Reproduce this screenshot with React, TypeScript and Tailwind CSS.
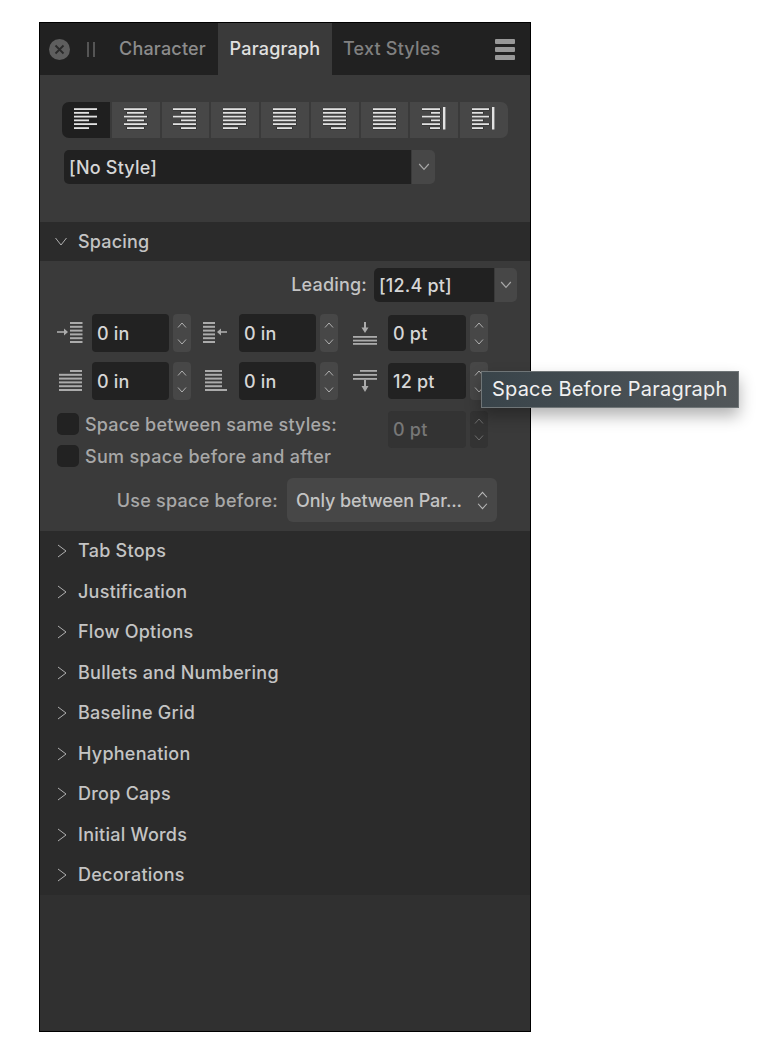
import React from "react";

const FONT = "font-['Inter','Liberation_Sans',sans-serif]";

type Line = [number, number, number];

function Lines({ lines, w = 24, h = 24, extra }: { lines: Line[]; w?: number; h?: number; extra?: React.ReactNode }) {
  return (
    <svg width={w} height={h} viewBox={`0 0 ${w} ${h}`} className="block shrink-0">
      {lines.map(([a, b, y], i) => (
        <g key={i}>
          <rect x={a - 0.5} y={y - 0.2} width={b - a + 1} height={2.6} fill="#262626" />
          <rect x={a} y={y + 0.2} width={b - a} height={1.8} fill="#e2e2e2" />
        </g>
      ))}
      {extra}
    </svg>
  );
}

const ys = [1, 4.75, 8.5, 12.25, 16, 20];
const mk = (spans: [number, number][]): Line[] => spans.map(([a, b], i) => [a, b, ys[i]]);
const Bar = (x: number) => <rect x={x} y={0} width={2.4} height={22.5} fill="#e2e2e2" />;

const alignIcons: React.ReactNode[] = [
  <Lines lines={mk([[0, 23], [0, 15], [0, 23], [0, 15], [0, 23], [0, 15]])} />,
  <Lines lines={mk([[0, 23], [3, 20], [0, 23], [3, 20], [0, 23], [3, 20]])} />,
  <Lines lines={mk([[0, 23], [8, 23], [0, 23], [8, 23], [0, 23], [8, 23]])} />,
  <Lines lines={mk([[0, 23], [0, 23], [0, 23], [0, 23], [0, 23], [0, 15]])} />,
  <Lines lines={mk([[0, 23], [0, 23], [0, 23], [0, 23], [0, 23], [4, 19]])} />,
  <Lines lines={mk([[0, 23], [0, 23], [0, 23], [0, 23], [0, 23], [8, 23]])} />,
  <Lines lines={mk([[0, 23], [0, 23], [0, 23], [0, 23], [0, 23], [0, 23]])} />,
  <Lines lines={mk([[0, 18], [9, 18], [0, 18], [9, 18], [0, 18], [8, 18]])} extra={Bar(21)} />,
  <Lines lines={mk([[0, 17], [0, 11], [0, 17], [0, 11], [0, 17], [0, 11]])} extra={Bar(20)} />,
];

function Chevron({ dir, size = 10, color = "#a8a8a8" }: { dir: "up" | "down"; size?: number; color?: string }) {
  const d = dir === "up" ? "M1 7.5 L5 3 L9 7.5" : "M1 2.5 L5 7 L9 2.5";
  return (
    <svg width={size} height={size} viewBox="0 0 10 10" className="block shrink-0">
      <path d={d} fill="none" stroke={color} strokeWidth={1} />
    </svg>
  );
}

function Spinner({ dim, className = "h-[38px]" }: { dim?: boolean; className?: string }) {
  const c = dim ? "#6e6e6e" : "#b0b0b0";
  return (
    <div className={`w-[18px] rounded-[4px] flex flex-col items-center justify-center gap-[7px] shrink-0 ${className} ${dim ? "bg-[#333333]" : "bg-[#474747]"}`}>
      <Chevron dir="up" size={10} color={c} />
      <Chevron dir="down" size={10} color={c} />
    </div>
  );
}

const G = "#ababab";
function Bars({ lines, w = 26, h = 24, extra }: { lines: Line[]; w?: number; h?: number; extra?: React.ReactNode }) {
  return (
    <svg width={w} height={h} viewBox={`0 0 ${w} ${h}`} className="block shrink-0">
      {lines.map(([a, b, y], i) => (
        <rect key={i} x={a} y={y} width={b - a} height={2} fill={G} />
      ))}
      {extra}
    </svg>
  );
}

const six = [1, 4.8, 8.6, 12.4, 16.2, 20];
const ArrowR = (x1: number, x2: number, y: number) => (
  <g>
    <rect x={x1} y={y - 0.8} width={x2 - x1 - 3} height={1.6} fill={G} />
    <path d={`M${x2 - 4} ${y - 3.5} L${x2} ${y} L${x2 - 4} ${y + 3.5} Z`} fill={G} />
  </g>
);
const ArrowL = (x1: number, x2: number, y: number) => (
  <g>
    <rect x={x1 + 3} y={y - 0.8} width={x2 - x1 - 3} height={1.6} fill={G} />
    <path d={`M${x1 + 4} ${y - 3.5} L${x1} ${y} L${x1 + 4} ${y + 3.5} Z`} fill={G} />
  </g>
);

const IconIndentLeft = <Bars lines={six.map((y) => [13, 25.5, y] as Line)} extra={ArrowR(0, 11, 11)} />;
const IconIndentRight = <Bars lines={six.map((y) => [0, 12, y] as Line)} extra={ArrowL(14, 24, 11)} />;
const IconFirstLine = <Bars lines={six.map((y, i) => [i === 0 ? 13 : 2, 25, y] as Line)} />;
const IconLastLine = <Bars lines={six.map((y, i) => [2, i === 5 ? 24 : 19, y] as Line)} />;
const IconAfter = (
  <svg width={24} height={24} viewBox="0 0 24 24" className="block shrink-0">
    <rect x={11} y={1} width={2} height={6} fill={G} />
    <path d="M8.5 6.5 L15.5 6.5 L12 12 Z" fill={G} />
    <rect x={0} y={15} width={24} height={1.8} fill={G} />
    <rect x={0} y={18.7} width={24} height={1.8} fill={G} />
    <rect x={0} y={22} width={24} height={1.8} fill={G} />
  </svg>
);
const IconBefore = (
  <svg width={24} height={24} viewBox="0 0 24 24" className="block shrink-0">
    <rect x={7} y={1} width={17} height={1.8} fill={G} />
    <rect x={0} y={5} width={24} height={1.8} fill={G} />
    <rect x={0} y={9} width={24} height={1.8} fill={G} />
    <rect x={11} y={11} width={2} height={7} fill={G} />
    <path d="M8.5 17 L15.5 17 L12 23 Z" fill={G} />
  </svg>
);

function Field({ value, dim, wide, className = "h-[38px]" }: { value: string; dim?: boolean; wide?: boolean; className?: string }) {
  return (
    <div className={`rounded-[4px] flex items-center pl-[5px] pt-[1px] shrink-0 ${wide ? "w-[78px]" : "w-[77px]"} ${className} ${dim ? "bg-[#333333] text-[#777777]" : "bg-[#222222] text-[#d6d6d6]"}`}>
      {value}
    </div>
  );
}

function Section({ label }: { label: string }) {
  return (
    <div className="h-[40.5px] flex items-center pl-[17px]">
      <svg width="10" height="14" viewBox="0 0 10 14" className="block shrink-0">
        <path d="M1 1 L9 7 L1 13" fill="none" stroke="#b0b0b0" strokeWidth="1" />
      </svg>
      <span className="ml-[11px] text-[#c4c4c4] tracking-[0.25px]">{label}</span>
    </div>
  );
}

const sections = ["Tab Stops", "Justification", "Flow Options", "Bullets and Numbering", "Baseline Grid", "Hyphenation", "Drop Caps", "Initial Words", "Decorations"];

export default function App() {
  return (
    <div className={`${FONT} w-[772px] h-[1064px] bg-white pt-[22px] pl-[39px] text-[18px] leading-[24px] font-medium tracking-[0.2px]`}>
      <div className="relative w-[492px] h-[1010px] border border-black bg-[#303030] flex flex-col">
        {/* Tabs */}
        <div className="h-[52px] bg-[#212121] flex shrink-0">
          <div className="w-[178px] flex items-center pl-[9px] relative">
            <div className="w-[21px] h-[21px] rounded-full bg-[#5e5e5e] flex items-center justify-center">
              <svg width="11" height="11" viewBox="0 0 11 11">
                <path d="M1.5 1.5 L9.5 9.5 M9.5 1.5 L1.5 9.5" stroke="#2a2a2a" strokeWidth="1.8" />
              </svg>
            </div>
            <div className="ml-[17px] w-[8px] h-[15px] border-x-2 border-[#555555]" />
            <span className="ml-[24px] text-[#8c8c8c]">Character</span>
          </div>
          <div className="w-[114px] bg-[#3a3a3a] flex items-center justify-center text-[#e0e0e0]">Paragraph</div>
          <div className="flex-1 flex items-center pl-[11px] text-[#808080]">
            Text Styles
            <div className="ml-auto mr-[15px] w-[20px] flex flex-col gap-[3px]">
              <div className="h-[5px] bg-[#989898] rounded-[1px]" />
              <div className="h-[5px] bg-[#989898] rounded-[1px]" />
              <div className="h-[5px] bg-[#989898] rounded-[1px]" />
            </div>
          </div>
        </div>

        {/* Alignment + style */}
        <div className="h-[147px] bg-[#3a3a3a] shrink-0 pt-[27px] pl-[22px]">
          <div className="w-[446px] h-[36px] grid grid-cols-9 gap-[2px] rounded-[7px] overflow-hidden">
            {alignIcons.map((ic, i) => (
              <div key={i} className={`flex items-center justify-center pb-[3px] ${i === 0 ? "bg-[#1f1f1f]" : "bg-[#474747]"}`}>
                {ic}
              </div>
            ))}
          </div>
          <div className="mt-[12px] ml-[2px] flex h-[34px]">
            <div className="w-[347px] bg-[#212121] rounded-l-[5px] flex items-center pl-[5px] pt-[2px] text-[#d6d6d6]">[No Style]</div>
            <div className="ml-px w-[23px] bg-[#474747] rounded-r-[5px] flex items-center justify-center">
              <Chevron dir="down" size={12} color="#a8a8a8" />
            </div>
          </div>
        </div>

        {/* Spacing header */}
        <div className="h-[39px] bg-[#2b2b2b] shrink-0 flex items-center pl-[15px]">
          <svg width="12" height="10" viewBox="0 0 12 10" className="block shrink-0">
            <path d="M0.5 1 L6 8 L11.5 1" fill="none" stroke="#b0b0b0" strokeWidth="1" />
          </svg>
          <span className="ml-[11px] text-[#c4c4c4]">Spacing</span>
        </div>

        {/* Spacing body */}
        <div className="h-[270px] bg-[#3a3a3a] shrink-0 pt-[7px] relative text-[#d0d0d0]">
          <div className="flex h-[34px]">
            <div className="w-[327px] flex items-center justify-end text-[#c4c4c4]">Leading:</div>
            <div className="ml-[7px] w-[120px] bg-[#212121] rounded-l-[5px] flex items-center pl-[5px] pt-[1px] text-[#d6d6d6]">[12.4 pt]</div>
            <div className="ml-px w-[22px] bg-[#474747] rounded-r-[5px] flex items-center justify-center">
              <Chevron dir="down" size={12} color="#a8a8a8" />
            </div>
          </div>

          <div className="mt-[12px] flex items-center h-[38px] pl-[17px]">
            <div className="w-[26px]">{IconIndentLeft}</div>
            <div className="ml-[9px]"><Field value="0 in" /></div>
            <div className="ml-[4px]"><Spinner /></div>
            <div className="ml-[12px] w-[26px]">{IconIndentRight}</div>
            <div className="ml-[10px]"><Field value="0 in" /></div>
            <div className="ml-[4px]"><Spinner /></div>
            <div className="ml-[15px] w-[24px]">{IconAfter}</div>
            <div className="ml-[11px]"><Field value="0 pt" wide className="h-[36px]" /></div>
            <div className="ml-[4px]"><Spinner /></div>
          </div>

          <div className="mt-[10px] flex items-center h-[38px] pl-[17px]">
            <div className="w-[26px]">{IconFirstLine}</div>
            <div className="ml-[9px]"><Field value="0 in" /></div>
            <div className="ml-[4px]"><Spinner /></div>
            <div className="ml-[12px] w-[26px]">{IconLastLine}</div>
            <div className="ml-[10px]"><Field value="0 in" /></div>
            <div className="ml-[4px]"><Spinner /></div>
            <div className="ml-[15px] w-[24px]">{IconBefore}</div>
            <div className="ml-[11px]"><Field value="12 pt" wide className="h-[36px]" /></div>
            <div className="ml-[4px]"><Spinner /></div>
          </div>

          <div className="mt-[11px] flex h-[37px] pl-[17px] text-[#a8a8a8]">
            <div className="w-[22px] h-[22px] mt-[2px] rounded-[5px] bg-[#222222]" />
            <span className="ml-[6px] w-[303px] mt-[2px]">Space between same styles:</span>
            <Field value="0 pt" dim wide className="h-[37px]" />
            <div className="ml-[4px]"><Spinner dim className="h-[37px]" /></div>
          </div>
          <div className="-mt-[3px] flex h-[22px] pl-[17px] text-[#a8a8a8]">
            <div className="w-[22px] h-[22px] rounded-[5px] bg-[#222222]" />
            <span className="ml-[6px] tracking-[0.32px]">Sum space before and after</span>
          </div>

          <div className="mt-[11px] flex items-center h-[44px] text-[#a8a8a8]">
            <div className="w-[238px] text-right pt-[1px] tracking-[0.26px]">Use space before:</div>
            <div className="ml-[9px] w-[210px] h-[44px] rounded-[6px] bg-[#474747] flex items-center pl-[9px] pr-[9px] text-[#c4c4c4]">
              <span className="pt-[1px] tracking-[-0.1px]">Only between Par...</span>
              <div className="ml-auto flex flex-col gap-[1px]">
                <Chevron dir="up" size={11} color="#b8b8b8" />
                <Chevron dir="down" size={11} color="#b8b8b8" />
              </div>
            </div>
          </div>
        </div>

        {/* Collapsed sections */}
        <div className="bg-[#2b2b2b] shrink-0 h-[364px]">
          {sections.map((s) => (
            <Section key={s} label={s} />
          ))}
        </div>

        {/* Tooltip */}
        <div className="absolute left-[441px] top-[348px] w-[258px] h-[37px] flex items-center pl-[10px] pb-[1px] border border-[#6f7577] bg-gradient-to-r from-[#39444a] to-[#52575a] text-[#f0f0f0] text-[20px] tracking-[0.2px] font-normal shadow-[0_8px_16px_rgba(0,0,0,0.3)] whitespace-nowrap">
          Space Before Paragraph
        </div>
      </div>
    </div>
  );
}
